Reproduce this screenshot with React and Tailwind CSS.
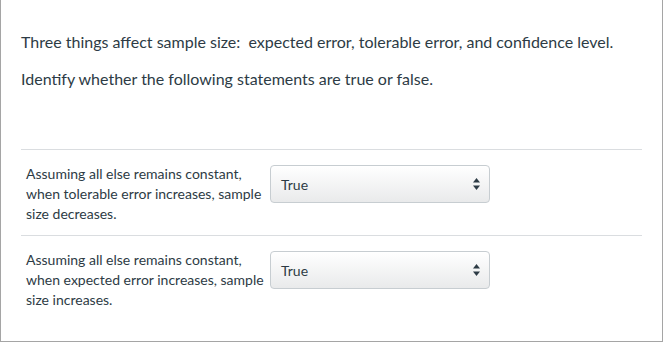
import React from 'react';

const rows = [
  'Assuming all else remains constant, when tolerable error increases, sample size decreases.',
  'Assuming all else remains constant, when expected error increases, sample size increases.',
];

function Arrows() {
  return (
    <svg width="7" height="12" viewBox="0 0 7 12" className="shrink-0">
      <path d="M3.5 0 L7 4.5 L0 4.5 Z" fill="#2d3b45" />
      <path d="M3.5 12 L7 7.5 L0 7.5 Z" fill="#2d3b45" />
    </svg>
  );
}

function FakeSelect() {
  return (
    <div className="w-[220px] h-[38px] mt-px flex items-center justify-between pl-[10px] pr-[9px] rounded-[4px] border border-[#c7cdd1] bg-gradient-to-b from-[#ffffff] to-[#e9eaeb] shadow-[inset_0_1px_0_#fff] text-[14px] text-[#2d3b45]">
      <span>True</span>
      <Arrows />
    </div>
  );
}

export default function App() {
  return (
    <div
      className="w-[663px] h-[342px] bg-white text-[#2d3b45] border-l border-r border-b border-[#a5a5a5] box-border"
      style={{fontFamily: 'Lato, "Open Sans", sans-serif'}}
    >
      <div className="px-[20px] pt-[30px]">
        <p className="text-[16px] leading-[24px] mb-[13px]">
          Three things affect sample size:&nbsp; expected error, tolerable error, and confidence level.
        </p>
        <p className="text-[16px] leading-[24px]">
          Identify whether the following statements are true or false.
        </p>
        <div className="mt-[58px] border-t border-[#dadde0]">
          {rows.map((text, i) => (
            <div
              key={i}
              className={
                'flex gap-[4px] pl-[5px] pt-[14px] pb-[11px] ' +
                (i === 0 ? 'border-b border-[#dadde0]' : '')
              }
            >
              <div className="w-[240px] text-[14px] leading-[20px]">{text}</div>
              <FakeSelect />
            </div>
          ))}
        </div>
      </div>
    </div>
  );
}
